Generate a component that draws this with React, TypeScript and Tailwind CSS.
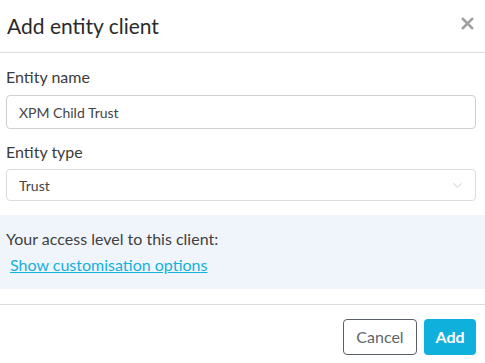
import { ChevronDown, X } from "lucide-react";

// Add entity client dialog
export default function App() {
  return (
    <div className="h-[363px] w-[485px] overflow-hidden bg-white font-['Lato',sans-serif] text-[#333]">
      <div className="flex h-[53px] items-center justify-between border-b border-[#dcdcdc] pl-[7px] pr-[8px]">
        <h1 className="text-[21px] text-[#2a2a2a]">Add entity client</h1>
        <X className="-mt-[6px] h-[19px] w-[19px] text-[#a0a0a0]" strokeWidth={3.2} />
      </div>

      <div className="pl-[6px] pr-[9px] pt-[14px]">
        <label className="block text-[16px] leading-[20px] text-[#3c3c3c]">Entity name</label>
        <div className="mt-[8px] flex h-[34px] items-center rounded-[4px] border border-[#cfcfcf] px-[12px] text-[14px] text-[#444]">
          XPM Child Trust
        </div>

        <label className="mt-[13px] block text-[16px] leading-[20px] text-[#3c3c3c]">Entity type</label>
        <div className="mt-[7px] flex h-[32px] items-center justify-between rounded-[4px] border border-[#dcdcdc] pl-[12px] pr-[10px] text-[14px] text-[#444]">
          <span>Trust</span>
          <ChevronDown className="h-[15px] w-[15px] text-[#b8b8b8]" strokeWidth={1.2} />
        </div>
      </div>

      <div className="mt-[14px] h-[74px] bg-[#f0f5fc] pl-[6px] pt-[14px]">
        <p className="text-[16px] leading-[20px] text-[#404040]">Your access level to this client:</p>
        <a href="#" className="ml-[4px] mt-[6px] inline-block text-[16px] leading-[20px] text-[#13b0e0] underline">
          Show customisation options
        </a>
      </div>

      <div className="mt-[15px] flex justify-end gap-[7px] border-t border-[#dcdcdc] pr-[9px] pt-[14px]">
        <button className="h-[36px] w-[74px] rounded-[4px] border border-[#5a6068] text-[16px] text-[#5f656c]">
          Cancel
        </button>
        <button className="h-[36px] w-[52px] rounded-[4px] bg-[#0fb0dc] text-[16px] font-bold text-white">Add</button>
      </div>
    </div>
  );
}
